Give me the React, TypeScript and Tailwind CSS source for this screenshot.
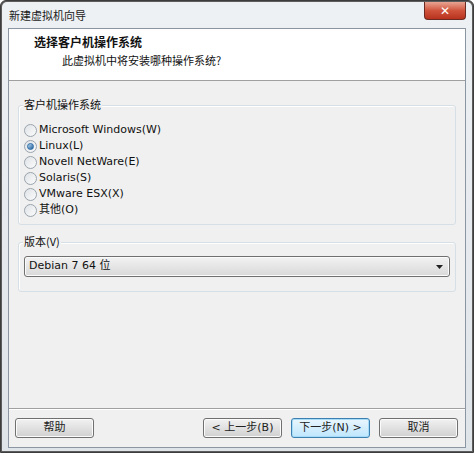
import React, { useState } from 'react';

const cjk = '"Noto Sans CJK SC", sans-serif';
const ui = 'Tahoma, "DejaVu Sans", "Noto Sans CJK SC", sans-serif';

const options = [
  'Microsoft Windows(W)',
  'Linux(L)',
  'Novell NetWare(E)',
  'Solaris(S)',
  'VMware ESX(X)',
  '其他(O)',
];

const Radio: React.FC<{ checked: boolean }> = ({ checked }) => (
  <span className="relative flex h-[13px] w-[13px] items-center justify-center rounded-full border border-[#9aa3ad] bg-gradient-to-br from-[#dfe3e7] to-[#fbfbfb]">
    {checked && (
      <span className="h-[7px] w-[7px] rounded-full bg-gradient-to-br from-[#b9dcf3] to-[#1e5f99] border border-[#2b6aa5]" />
    )}
  </span>
);

const Button: React.FC<{ label: string; focused?: boolean }> = ({ label, focused }) => (
  <button
    className={`h-[20px] w-[79px] rounded-[3px] border text-[11px] text-[#222] bg-gradient-to-b ${
      focused
        ? 'border-[#3c7fb1] from-[#eaf6fd] to-[#bee6fd] shadow-[inset_0_0_0_1px_#a6dcf7]'
        : 'border-[#707070] from-[#f2f2f2] to-[#d0d0d0] shadow-[inset_0_0_0_1px_#fbfbfb]'
    }`}
    style={{ fontFamily: ui }}
  >
    {label}
  </button>
);

export default function App() {
  const [selected, setSelected] = useState(1);

  return (
    <div className="h-[453px] w-[474px] rounded-t-[6px] border border-[#3d3d3d] bg-[#5c5c5c] p-px" style={{ fontFamily: ui }}>
      <div className="flex h-full flex-col rounded-t-[5px] bg-gradient-to-b from-[#eef1f4] to-[#dfe4e9] px-[6px] pb-[3px]">
        {/* title bar */}
        <div className="flex h-[26px] items-start justify-between">
          <span className="pl-[1px] pt-[5px] text-[11px] text-[#1a1a1a]" style={{ fontFamily: cjk }}>
            新建虚拟机向导
          </span>
          <div className="flex h-[18px] w-[42px] items-center justify-center rounded-b-[4px] border border-t-0 border-[#6b2b22] bg-gradient-to-b from-[#e8a493] via-[#d0533b] to-[#b8321e]">
            <span className="text-[12px] font-bold leading-none text-white">✕</span>
          </div>
        </div>

        {/* content */}
        <div className="flex flex-1 flex-col border border-[#8b96a2] bg-[#f0f0f0]">
          <div className="h-[52px] border-b border-[#a0a0a0] bg-white pl-[25px] pt-[4px]" style={{ fontFamily: cjk }}>
            <div className="text-[12px] font-bold leading-[18px] text-[#111]">选择客户机操作系统</div>
            <div className="pl-[28px] text-[11px] leading-[18px] text-[#111]">此虚拟机中将安装哪种操作系统?</div>
          </div>

          <div className="flex flex-1 flex-col px-[9px]">
            {/* guest os group */}
            <div className="relative mt-[24px] h-[120px] rounded-[3px] border border-[#d5dfe5] shadow-[inset_1px_1px_0_#fff]">
              <span className="absolute left-[4px] top-[-10px] bg-[#f0f0f0] px-[1px] text-[11px] text-[#111]" style={{ fontFamily: cjk }}>
                客户机操作系统
              </span>
              <div className="flex flex-col pl-[5px] pt-[16px]">
                {options.map((o, i) => (
                  <label
                    key={o}
                    onClick={() => setSelected(i)}
                    className="flex h-[16px] items-center gap-[2px] text-[11px] text-[#111]"
                  >
                    <Radio checked={selected === i} />
                    <span>{o}</span>
                  </label>
                ))}
              </div>
            </div>

            {/* version group */}
            <div className="relative mt-[17px] h-[50px] rounded-[3px] border border-[#d5dfe5] shadow-[inset_1px_1px_0_#fff]">
              <span className="absolute left-[4px] top-[-10px] bg-[#f0f0f0] px-[1px] text-[11px] text-[#111]" style={{ fontFamily: cjk }}>
                版本(V)
              </span>
              <div className="mx-[5px] mt-[13px] flex h-[21px] items-center justify-between rounded-[3px] border border-[#707070] bg-gradient-to-b from-[#f2f2f2] to-[#d9d9d9] pl-[4px] pr-[6px] shadow-[inset_0_0_0_1px_#fbfbfb]">
                <span className="text-[11px] text-[#111]">Debian 7 64 位</span>
                <svg width="7" height="4" viewBox="0 0 7 4">
                  <path d="M0 0h7L3.5 4z" fill="#222" />
                </svg>
              </div>
            </div>
          </div>

          {/* footer */}
          <div className="flex h-[39px] items-center border-t border-[#a0a0a0] pl-[6px] pr-[7px] shadow-[inset_0_1px_0_#fff]">
            <Button label="帮助" />
            <div className="ml-auto flex gap-[9px]">
              <Button label="< 上一步(B)" />
              <Button label="下一步(N) >" focused />
              <Button label="取消" />
            </div>
          </div>
        </div>
      </div>
    </div>
  );
}
